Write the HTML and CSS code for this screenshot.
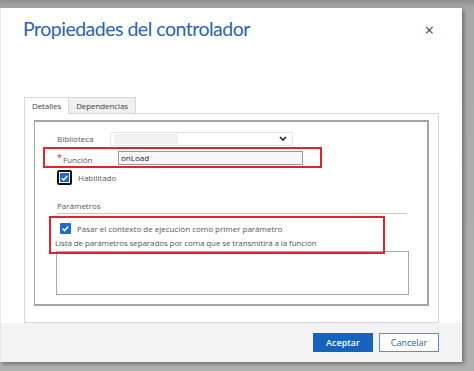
FILE: index.html
```html
<!DOCTYPE html>
<html lang="es">
<head>
<meta charset="utf-8">
<title>Propiedades del controlador</title>
<link rel="stylesheet" href="styles.css">
</head>
<body>
<div class="dialog">
  <div class="header">
    <h1 class="title">Propiedades del controlador</h1>
    <span class="close">×</span>
  </div>
  <div class="content">
    <div class="tabs">
      <span class="tab active">Detalles</span>
      <span class="tab">Dependencias</span>
    </div>
    <div class="panel">
      <div class="inner">
        <div class="row lib-row">
          <span class="label">Biblioteca</span>
          <span class="select"><span class="dots"></span>
            <svg class="chev" width="8" height="5" viewBox="0 0 8 5"><path d="M1 1l3 3 3-3" fill="none" stroke="#222" stroke-width="1.6"/></svg>
          </span>
        </div>
        <div class="row fn-row hl">
          <span class="label"><span class="req">*</span>Función</span>
          <span class="input">onLoad</span>
        </div>
        <div class="row chk-row">
          <span class="chk big"><span class="chk-in"><svg width="10" height="10" viewBox="0 0 10 10"><path d="M2 5.2l2 2 4-4.4" fill="none" stroke="#fff" stroke-width="1.6"/></svg></span></span>
          <span class="chk-label">Habilitado</span>
        </div>
        <div class="params-head">Parámetros</div>
        <div class="hl hl2">
          <div class="pass-row">
            <span class="chk small"><svg width="9" height="9" viewBox="0 0 10 10"><path d="M2 5.2l2 2 4-4.4" fill="none" stroke="#fff" stroke-width="1.8"/></svg></span>
            <span>Pasar el contexto de ejecución como primer parámetro</span>
          </div>
          <div class="list-label">Lista de parámetros separados por coma que se transmitirá a la función</div>
        </div>
        <div class="textarea"></div>
      </div>
    </div>
  </div>
  <div class="footer">
    <span class="btn primary">Aceptar</span>
    <span class="btn secondary">Cancelar</span>
  </div>
</div>
</body>
</html>
```
FILE: styles.css
```css
* { box-sizing: border-box; }
html, body { margin: 0; padding: 0; }
body {
  width: 474px;
  height: 371px;
  overflow: hidden;
  background: linear-gradient(#8e8e8e, #a8a8a8 8px, #b0b0b0);
  font-family: "Open Sans", "Noto Sans", sans-serif;
  color: #333;
}
.dialog {
  margin-top: 8px;
  width: 462px;
  height: 354px;
  background: #fff;
  display: flex;
  flex-direction: column;
  box-shadow: 2px 2px 4px rgba(0,0,0,0.35);
  border-left: 1px solid #e8e8e8;
}
.header {
  display: flex;
  justify-content: space-between;
  align-items: flex-start;
  padding: 7px 28px 0 22px;
  height: 89px;
}
.title {
  margin: 0;
  font-family: Lato, "Open Sans", sans-serif;
  font-weight: 400;
  font-size: 19.5px;
  line-height: 28px;
  color: #2a63b2;
  letter-spacing: -0.5px;
}
.close {
  font-size: 16px;
  color: #444;
  margin-top: 8px;
  line-height: 14px;
}
.content {
  padding: 0 23px 0 23px;
  flex: 1;
}
.tabs {
  display: flex;
  height: 16px;
  font-size: 8px;
}
.tab {
  padding: 0 7px;
  line-height: 15px;
  background: #f0f0f0;
  border: 1px solid #d8d8d8;
  border-bottom: none;
  color: #444;
  letter-spacing: -0.1px;
}
.tab.active {
  background: #fff;
  padding: 0 7px 0 7px;
  height: 17px;
  position: relative;
  z-index: 1;
  border-right: none;
}
.panel {
  border: 1px solid #d6d6d6;
  height: 210px;
  width: 415px;
  padding: 6px 9px 0 9px;
}
.inner {
  border: 2px solid #a4a4a4;
  border-width: 2px 2px 2px 1px;
  height: 186px;
  padding: 9px 0 0 8px;
  font-size: 8px;
  color: #555;
}
.row { display: flex; align-items: center; }
.label { width: 67px; padding-left: 14px; }
.lib-row { height: 15px; margin-bottom: 1px; }
.select {
  width: 183px;
  height: 14px;
  border: 1px solid #e4e4e4;
  display: flex;
  align-items: center;
  justify-content: space-between;
  padding: 0 5px 0 3px;
}
.dots {
  width: 64px;
  height: 10px;
  background-image: radial-gradient(circle, #d4d4d4 0.5px, transparent 0.8px);
  background-size: 2px 2px;
}
.chev { display: block; }
.hl { border: 2px solid #e3232c; }
.fn-row {
  margin-left: 0;
  width: 279px;
  height: 21px;
  margin-top: 0;
}
.fn-row .label { width: 73px; padding-left: 12px; padding-top: 3px; }
.req { color: #d02020; font-size: 9px; margin-right: 1px; position: relative; top: -2px; }
.input {
  width: 185px;
  height: 14px;
  border: 1px solid #999;
  background: #f8f8f8;
  padding-left: 2px;
  line-height: 12px;
  color: #222;
}
.chk-row { height: 17px; margin-top: 1px; padding-left: 14px; }
.chk {
  display: inline-flex;
  align-items: center;
  justify-content: center;
}
.chk.big {
  width: 15px;
  height: 15px;
  border: 2px solid #111;
  border-radius: 2px;
  padding: 1px;
}
.chk-in {
  width: 100%;
  height: 100%;
  background: #1e6ad0;
  display: flex;
  align-items: center;
  justify-content: center;
}
.chk-label { margin-left: 6px; }
.params-head { margin-top: 14px; padding-left: 14px; height: 10px; }
.hl2 {
  margin-top: 6px;
  margin-left: 6px;
  width: 336px;
  height: 38px;
  padding: 4px 0 0 4px;
  position: relative;
}
.hl2::before {
  content: "";
  position: absolute;
  top: -5px;
  left: 6px;
  width: 350px;
  border-top: 1px solid #c8c8c8;
}
.pass-row { display: flex; align-items: center; gap: 6px; height: 12px; padding-left: 5px; }
.chk.small { width: 11px; height: 11px; background: #1e6ad0; border-radius: 1px; }
.list-label { margin-top: 3px; letter-spacing: -0.1px; }
.textarea {
  margin-left: 13px;
  margin-top: -3px;
  width: 353px;
  height: 44px;
  border: 1px solid #a8a8a8;
}
.footer {
  background: #f3f3f3;
  height: 39px;
  display: flex;
  justify-content: flex-end;
  align-items: center;
  gap: 6px;
  padding: 0 23px 0 0;
  font-size: 9px;
}
.btn {
  width: 60px;
  height: 19px;
  display: flex;
  align-items: center;
  justify-content: center;
}
.primary { background: #1563bd; color: #fff; font-weight: 600; }
.secondary { background: #fff; border: 1px solid #5b8fd0; color: #2a63b2; }
```
